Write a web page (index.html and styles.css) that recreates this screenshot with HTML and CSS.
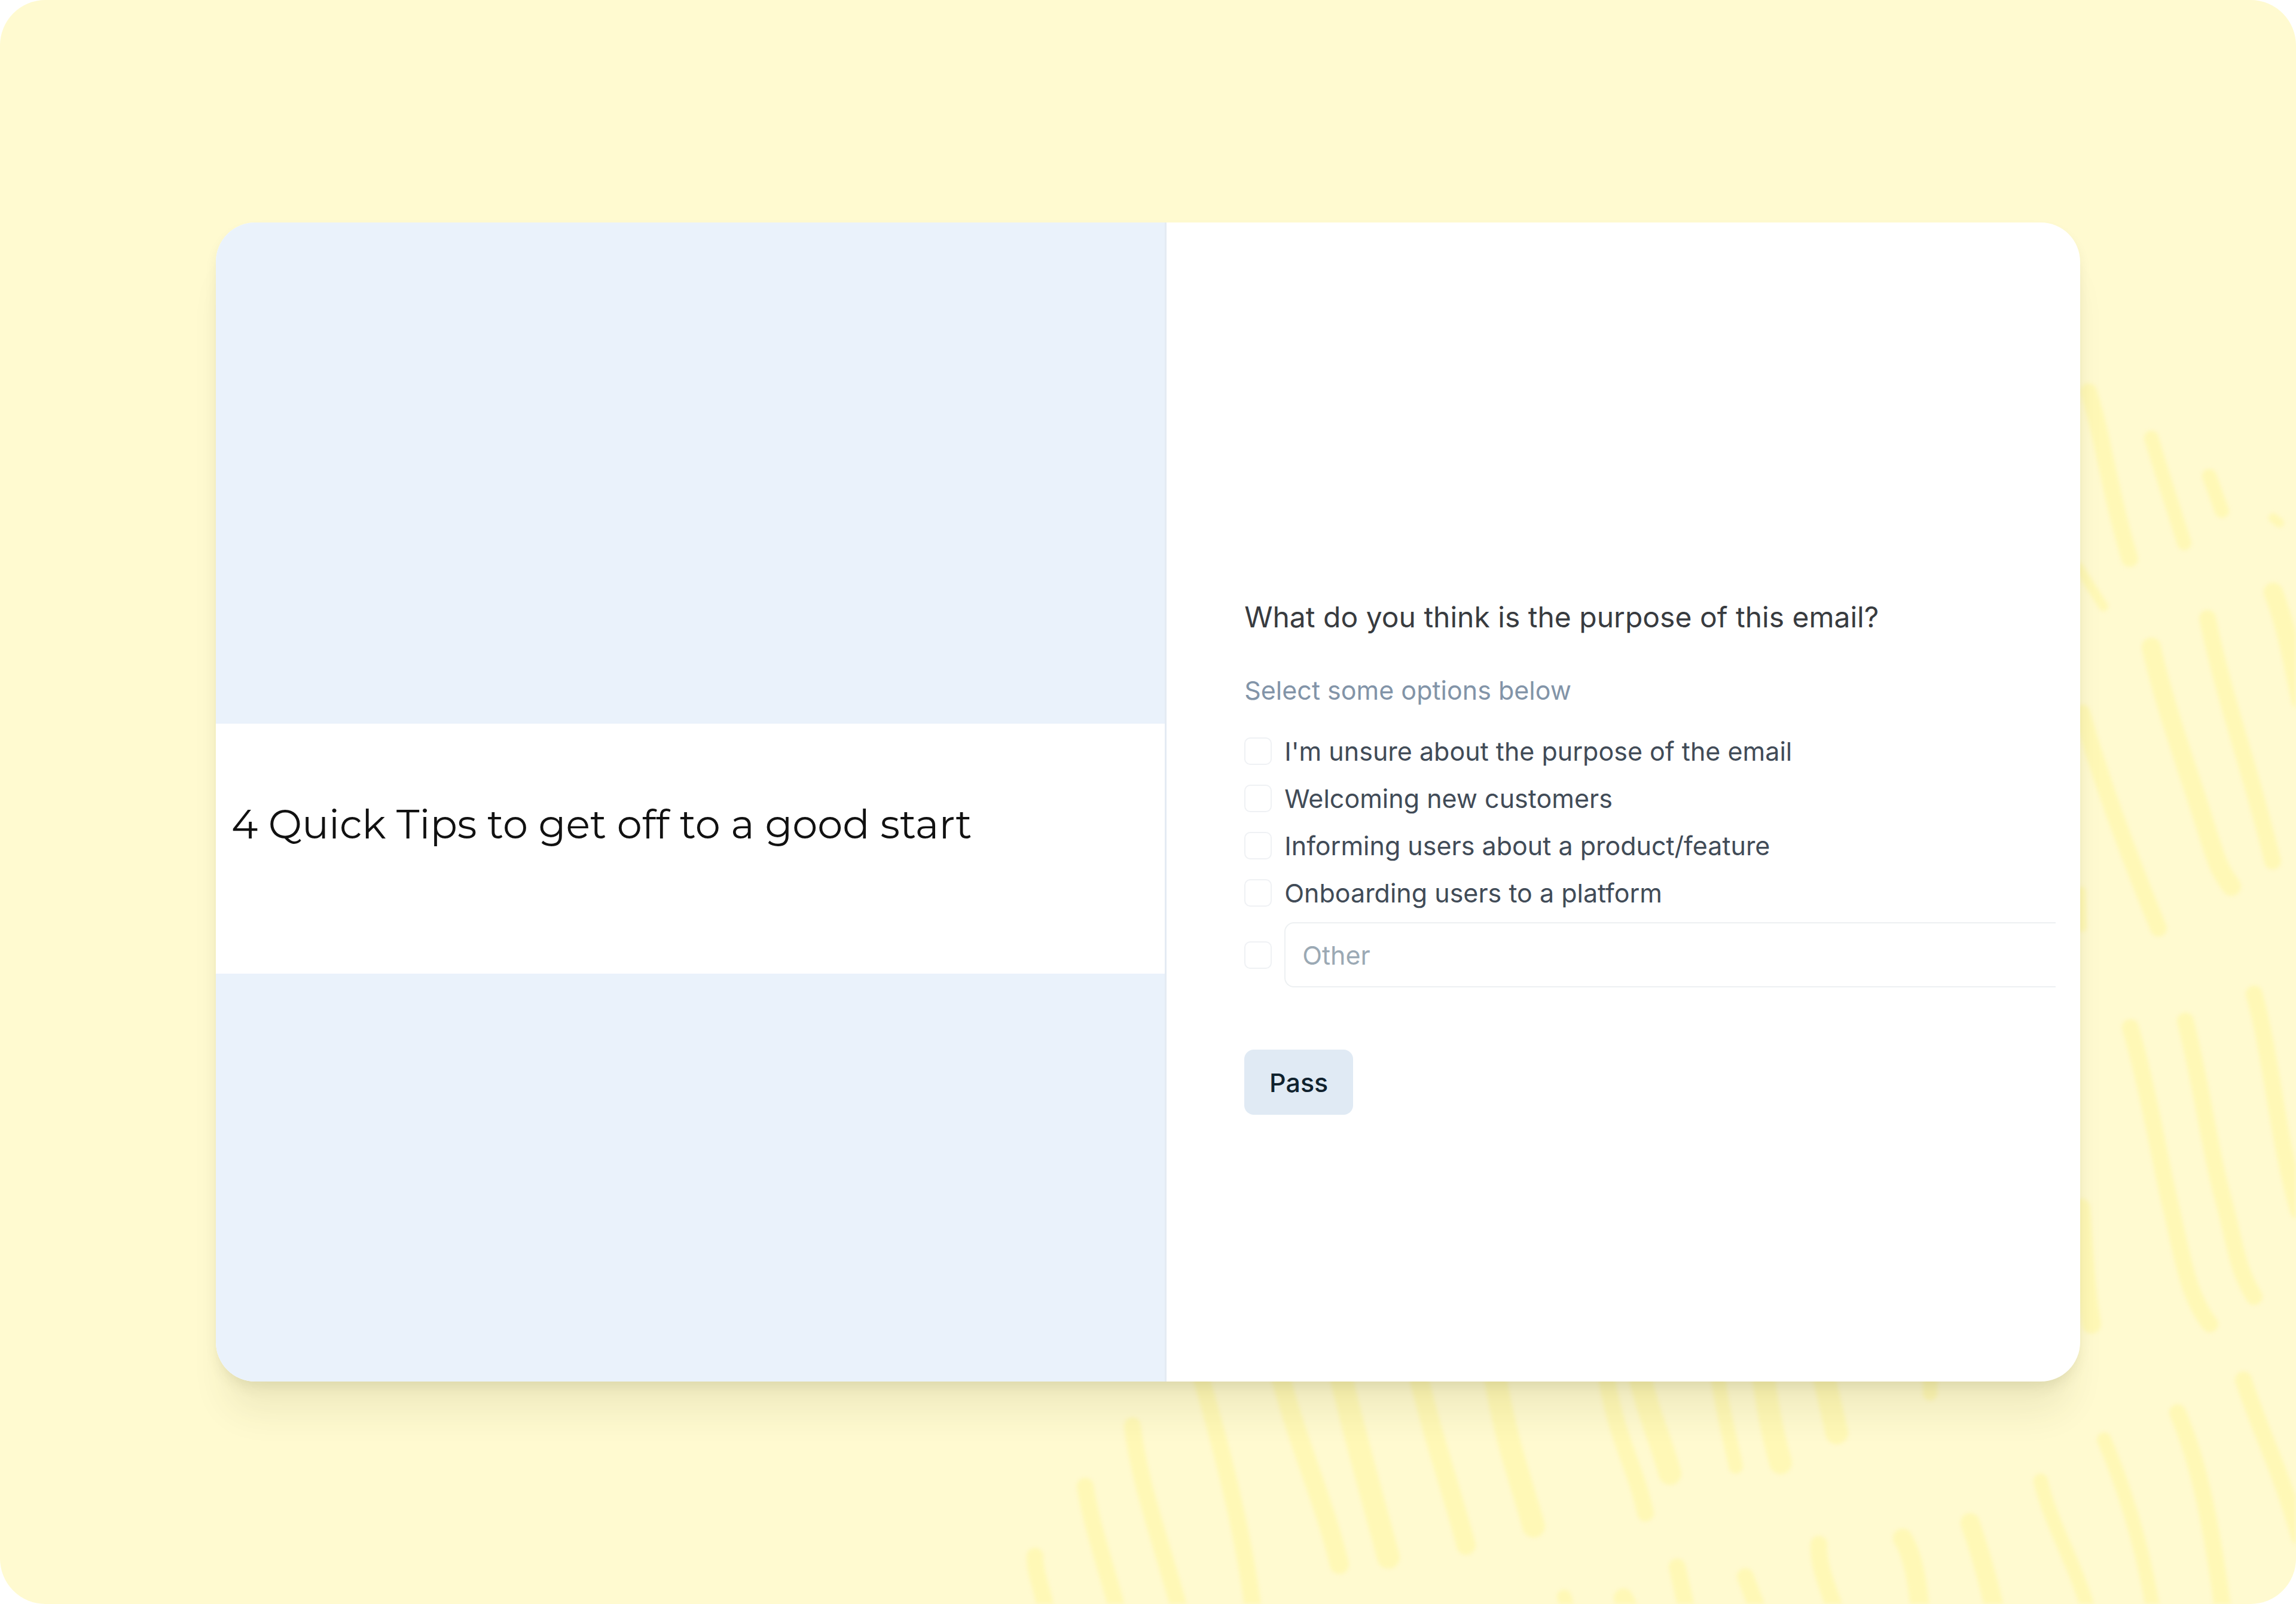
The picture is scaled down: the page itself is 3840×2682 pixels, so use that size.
FILE: index.html
```
<!DOCTYPE html>
<html lang="en">
<head>
    <meta charset="UTF-8">
    <title>Email survey</title>
    <link rel="stylesheet" href="styles.css">
</head>
<body>
<div class="page">
    <!-- brush strokes behind the card -->
    <svg class="strokes" viewBox="0 0 3840 2682" preserveAspectRatio="xMaxYMax slice" aria-hidden="true">
        <g stroke-width="28">
            <path d="M3493 655C3515 720 3530 830 3562 934"/>
            <path d="M3692 1034C3720 1170 3765 1290 3801 1440"/>
            <path d="M3482 1192C3515 1310 3560 1430 3610 1552"/>
            <path d="M3770 1662C3800 1770 3808 1900 3844 2024"/>
            <path d="M3655 1707C3685 1828 3695 1920 3717 2000S3740 2120 3770 2168"/>
            <path d="M3563 1718C3595 1830 3610 1930 3630 2015S3658 2165 3696 2214"/>
            <path d="M3752 2307C3775 2380 3815 2460 3846 2570"/>
            <path d="M3642 2362C3680 2450 3700 2560 3719 2700"/>
            <path d="M2685 2290C2700 2400 2735 2450 2752 2530"/>
            <path d="M2005 2290C2040 2410 2080 2560 2097 2700"/>
            <path d="M1894 2384C1905 2480 1940 2570 1975 2700"/>
            <path d="M1815 2485C1825 2550 1850 2620 1871 2700"/>
            <path d="M1731 2602C1730 2630 1745 2660 1751 2700"/>
            <path d="M3042 2582C3040 2620 3060 2660 3072 2700"/>
            <path d="M2919 2636L2943 2700"/>
            <path d="M2805 2620L2823 2700"/>
        </g>
        <g stroke-width="24">
            <path d="M3598 732C3615 790 3635 850 3653 908"/>
            <path d="M3695 796L3716 854"/>
            <path d="M3519 2407C3550 2480 3580 2570 3603 2700"/>
            <path d="M3413 2476C3430 2550 3470 2610 3495 2700"/>
            <path d="M2872 2290C2880 2360 2895 2410 2903 2452"/>
            <path d="M3229 2290L3228 2330"/>
            <path d="M2616 2670L2624 2700"/>
        </g>
        <g stroke-width="16">
            <path d="M3802 866L3812 874"/>
            <path d="M3476 948L3518 1014"/>
            <path d="M3480 1490L3482 1550"/>
        </g>
        <g stroke-width="32">
            <path d="M3598 1082C3620 1180 3660 1290 3685 1370S3710 1450 3732 1482"/>
            <path d="M3802 990C3825 1050 3835 1110 3848 1170"/>
            <path d="M3480 2020C3485 2090 3488 2160 3498 2214"/>
            <path d="M3295 2546C3310 2590 3325 2640 3338 2700"/>
            <path d="M3182 2572C3200 2600 3208 2650 3212 2700"/>
            <path d="M2715 2672L2729 2700"/>
            <path d="M2139 2290C2165 2400 2215 2510 2240 2616"/>
            <path d="M2370 2290C2395 2400 2430 2500 2452 2584"/>
        </g>
        <g stroke-width="38">
            <path d="M2740 2290C2755 2360 2775 2400 2793 2464"/>
            <path d="M3048 2290L3072 2396"/>
            <path d="M2948 2290C2955 2350 2965 2400 2978 2446"/>
            <path d="M2240 2290C2265 2400 2300 2520 2322 2604"/>
            <path d="M2499 2290C2515 2400 2545 2480 2565 2552"/>
        </g>
    </svg>
    <main class="card">
        <section class="preview">
            <div class="email">
                <h1>4 Quick Tips to get off to a good start</h1>
            </div>
        </section>
        <form class="question">
            <h2>What do you think is the purpose of this email?</h2>
            <p class="hint">Select some options below</p>
            <ul class="options">
                <li><input type="checkbox" id="unsure"><label for="unsure">I'm unsure about the purpose of the email</label></li>
                <li><input type="checkbox" id="welcome"><label for="welcome">Welcoming new customers</label></li>
                <li><input type="checkbox" id="inform"><label for="inform">Informing users about a product/feature</label></li>
                <li><input type="checkbox" id="onboard"><label for="onboard">Onboarding users to a platform</label></li>
                <li class="other">
                    <input type="checkbox" id="other" aria-label="Other">
                    <input type="text" class="othertext" placeholder="Other" aria-label="Other answer">
                </li>
            </ul>
            <button type="button" class="pass">Pass</button>
        </form>
    </main>
</div>
</body>
</html>
```
FILE: styles.css
```
*{
    box-sizing: border-box;
    margin: 0;
    padding: 0;
}
body{
    background: white;
    font-family: Inter, "Liberation Sans", sans-serif;
}
.page{
    position: relative;
    display: flex;
    min-height: 100vh;
    padding: 372px 361px;
    background: #fffad0;
    border-radius: 76px;
    overflow: hidden;
}
.strokes{
    position: absolute;
    top: 0;
    left: 0;
    width: 100%;
    height: 100%;
    fill: none;
    stroke: #fff8b6;
    stroke-linecap: round;
    stroke-linejoin: round;
    filter: blur(3px);
}
.card{
    position: relative;
    flex: 1;
    display: flex;
    background: white;
    border-radius: 66px;
    box-shadow: 0 12px 24px -6px rgba(60,60,0,0.12), 0 68px 60px -16px rgba(60,60,0,0.08);
}
/*left side*/
.preview{
    width: 51%;
    padding-top: 838px;
    background: #eaf2fb;
    border-right: 3px solid #e4ebf3;
    border-radius: 66px 0 0 66px;
}
.email{
    height: 418px;
    padding: 126px 26px;
    background: white;
}
.email h1{
    font-family: Montserrat, Inter, sans-serif;
    font-size: 67px;
    line-height: 84px;
    font-weight: 400;
    color: #111;
    white-space: nowrap;
}
/*right side*/
.question{
    flex: 1;
    padding: 628px 41px 60px 130px;
}
.question h2{
    font-size: 48px;
    line-height: 64px;
    font-weight: 400;
    color: #383b3f;
}
.hint{
    margin-top: 60px;
    font-size: 43px;
    line-height: 60px;
    color: #8294a8;
}
.options{
    margin-top: 32px;
    list-style: none;
}
.options li{
    display: flex;
    align-items: center;
    gap: 21px;
    height: 79px;
    font-size: 43px;
    color: #414b57;
}
.options input[type="checkbox"]{
    appearance: none;
    flex: none;
    width: 46px;
    height: 46px;
    background: white;
    border: 2px solid #eff1f4;
    border-radius: 10px;
}
.options .other{
    height: 109px;
    margin-top: 10px;
}
.othertext{
    flex: 1;
    height: 109px;
    padding: 0 28px;
    border: 2px solid #edf0f2;
    border-right: 0;
    border-radius: 16px 0 0 16px;
    font: inherit;
    background: white;
}
.othertext::placeholder{
    color: #9ba9b4;
}
.pass{
    margin-top: 104px;
    width: 182px;
    height: 109px;
    border: 0;
    border-radius: 16px;
    background: #e0eaf4;
    font-family: inherit;
    font-size: 43px;
    font-weight: 500;
    color: #10222e;
}
```
